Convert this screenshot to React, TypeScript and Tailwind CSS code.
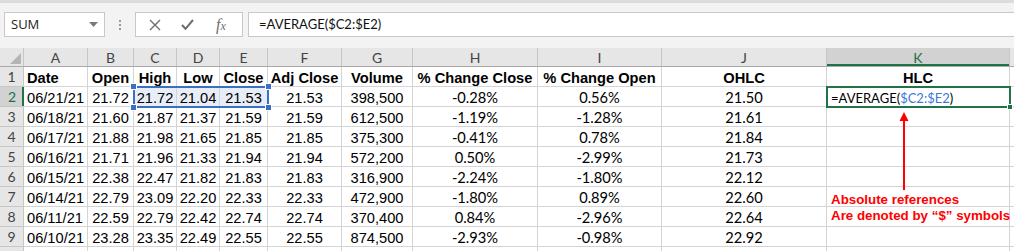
import React from "react";

const arial = "font-['Liberation_Sans',Arial,sans-serif]";
const calibri = "font-['Lato','Noto_Sans',sans-serif]";

const widths = [64, 46, 43, 43, 48, 74, 71, 125, 124, 165, 183];
const letters = ["A", "B", "C", "D", "E", "F", "G", "H", "I", "J", "K"];
const headings = ["Date", "Open", "High", "Low", "Close", "Adj Close", "Volume", "% Change Close", "% Change Open", "OHLC", "HLC"];

const rows = [
  ["06/21/21", "21.72", "21.72", "21.04", "21.53", "21.53", "398,500", "-0.28%", "0.56%", "21.50"],
  ["06/18/21", "21.60", "21.87", "21.37", "21.59", "21.59", "612,500", "-1.19%", "-1.28%", "21.61"],
  ["06/17/21", "21.88", "21.98", "21.65", "21.85", "21.85", "375,300", "-0.41%", "0.78%", "21.84"],
  ["06/16/21", "21.71", "21.96", "21.33", "21.94", "21.94", "572,200", "0.50%", "-2.99%", "21.73"],
  ["06/15/21", "22.38", "22.47", "21.82", "21.83", "21.83", "316,900", "-2.24%", "-1.80%", "22.12"],
  ["06/14/21", "22.79", "23.09", "22.20", "22.33", "22.33", "472,900", "-1.80%", "0.89%", "22.60"],
  ["06/11/21", "22.59", "22.79", "22.42", "22.74", "22.74", "370,400", "0.84%", "-2.96%", "22.64"],
  ["06/10/21", "23.28", "23.35", "22.49", "22.55", "22.55", "874,500", "-2.93%", "-0.98%", "22.92"],
];

function FormulaBar() {
  return (
    <div className="relative h-[48px] bg-[#f3f3f3]">
      <div className="h-[3px] bg-[#dcdcdc]" />
      <div className="flex items-start pt-[9px]">
        <div className="ml-[4px] flex h-[25px] w-[101px] items-center justify-between border border-[#c8c8c8] bg-white pl-[6px] pr-[6px]">
          <span className="font-['Open_Sans',sans-serif] text-[13px] text-[#222]">SUM</span>
          <svg width="9" height="5" viewBox="0 0 9 5">
            <path d="M0 0h9L4.5 5z" fill="#7a7a7a" />
          </svg>
        </div>
        <div className="ml-[14px] flex h-[25px] flex-col justify-center gap-[2px]">
          <span className="block h-[2px] w-[2px] bg-[#9a9a9a]" />
          <span className="block h-[2px] w-[2px] bg-[#9a9a9a]" />
          <span className="block h-[2px] w-[2px] bg-[#9a9a9a]" />
        </div>
        <div className="ml-[14px] flex h-[25px] w-[108px] items-center border border-[#c8c8c8] bg-white">
          <svg className="ml-[13px]" width="12" height="12" viewBox="0 0 12 12">
            <path d="M1 1l10 10M11 1L1 11" stroke="#6e6e6e" strokeWidth="1.4" />
          </svg>
          <svg className="ml-[20px]" width="13" height="11" viewBox="0 0 13 11">
            <path d="M1 6l3.5 3.8L12 1" stroke="#6e6e6e" strokeWidth="2" fill="none" />
          </svg>
          <span className="ml-[22px] font-['Liberation_Serif',serif] text-[16px] italic text-[#6e6e6e]">
            f<span className="text-[12px]">x</span>
          </span>
        </div>
        <div className="ml-[5px] flex h-[25px] flex-1 items-center border border-r-0 border-[#c8c8c8] bg-white pl-[10px]">
          <span className={`${calibri} text-[13px] text-[#111]`}>=AVERAGE($C2:$E2)</span>
        </div>
      </div>
    </div>
  );
}

function ColumnHeader() {
  return (
    <div className="flex h-[19px] border-b border-[#a9a9a9] bg-[#e6e6e6]">
      <div className="relative w-[24px] shrink-0 border-r border-[#c6c6c6]">
        <svg className="absolute bottom-[2px] right-[2px]" width="11" height="11" viewBox="0 0 11 11">
          <path d="M11 0v11H0z" fill="#b5b5b5" />
        </svg>
      </div>
      {letters.map((l, i) => (
        <div
          key={l}
          style={{ width: widths[i] }}
          className={
            l === "K"
              ? `shrink-0 border-r border-[#c6c6c6] bg-[#d2d2d2] text-center ${calibri} text-[14px] leading-[19px] text-[#217346] shadow-[inset_0_-2px_0_#217346]`
              : `shrink-0 border-r border-[#c6c6c6] text-center ${calibri} text-[14px] leading-[19px] text-[#444]`
          }
        >
          {l}
        </div>
      ))}
      <div className="flex-1" />
    </div>
  );
}

function RowHead({ n, active }: { n?: number; active?: boolean }) {
  return (
    <div
      className={
        active
          ? `w-[24px] shrink-0 border-b border-[#c6c6c6] bg-[#d2d2d2] text-center ${calibri} text-[14px] leading-[19px] text-[#217346] shadow-[inset_-2px_0_0_#217346]`
          : `w-[24px] shrink-0 border-b border-r border-[#c6c6c6] bg-[#e6e6e6] text-center ${calibri} text-[14px] leading-[19px] text-[#444]`
      }
    >
      {n}
    </div>
  );
}

function HeadingRow() {
  return (
    <div className="flex h-[20px]">
      <RowHead n={1} />
      {headings.map((h, i) => (
        <div
          key={h}
          style={{ width: widths[i] }}
          className={`shrink-0 overflow-hidden whitespace-nowrap border-b border-r border-[#d4d4d4] pt-[2px] ${arial} text-[14.67px] font-bold leading-[18px] text-black ${
            i === 0 ? "pl-[3px] text-left" : "text-center"
          }`}
        >
          {h}
        </div>
      ))}
      <div className="flex-1 border-b border-[#d4d4d4]" />
    </div>
  );
}

function DataRow({ n, cells }: { n: number; cells: string[] }) {
  return (
    <div className="flex h-[20px]">
      <RowHead n={n} active={n === 2} />
      {cells.map((c, i) => {
        const inRef = n === 2 && i >= 2 && i <= 4;
        const font = i >= 7 ? `${calibri} text-[14.67px]` : `${arial} text-[14.67px]`;
        return (
          <div
            key={i}
            style={{ width: widths[i] }}
            className={`shrink-0 overflow-hidden whitespace-nowrap border-b border-r border-[#d4d4d4] pt-[2px] leading-[18px] text-black ${font} ${
              i === 0 ? "pl-[3px] text-left" : "text-center"
            } ${inRef ? "bg-[#e8eef8]" : ""}`}
          >
            {c}
          </div>
        );
      })}
      <div
        style={{ width: widths[10] }}
        className={`shrink-0 whitespace-nowrap border-b border-r border-[#d4d4d4] pl-[4px] pt-[2px] leading-[18px] ${calibri} text-[13px] text-black`}
      >
        {n === 2 && (
          <>
            =AVERAGE(<span className="text-[#3b7ad9]">$C2:$E2</span>)
          </>
        )}
      </div>
      <div className="flex-1 border-b border-[#d4d4d4]" />
    </div>
  );
}

export default function App() {
  return (
    <div className="relative h-[251px] w-[1014px] overflow-hidden bg-white">
      <FormulaBar />
      <ColumnHeader />
      <HeadingRow />
      {rows.map((r, i) => (
        <DataRow key={i} n={i + 2} cells={r} />
      ))}
      <div className="flex h-[20px]">
        <RowHead />
        {widths.map((w, i) => (
          <div key={i} style={{ width: w }} className="shrink-0 border-r border-[#d4d4d4]" />
        ))}
      </div>

      {/* reference highlight C2:E2 */}
      <div className="pointer-events-none absolute left-[133px] top-[86px] h-[22px] w-[136px] border-2 border-[#3a6fc3]" />
      {[
        [131, 84],
        [266, 84],
        [131, 105],
        [266, 105],
      ].map(([x, y], i) => (
        <div
          key={i}
          style={{ left: x, top: y }}
          className="absolute h-[5px] w-[5px] bg-[#3a6fc3] outline outline-1 outline-white"
        />
      ))}

      {/* active cell K2 */}
      <div className="pointer-events-none absolute left-[826px] top-[86px] h-[22px] w-[185px] border-2 border-[#217346]" />
      <div className="absolute left-[1007px] top-[104px] h-[6px] w-[6px] border border-white bg-[#217346]" />

      {/* annotation */}
      <svg className="absolute left-[898px] top-[112px]" width="12" height="78" viewBox="0 0 12 78">
        <path d="M6 0L10.5 9h-9z" fill="#ff0000" />
        <path d="M6 8v70" stroke="#ff0000" strokeWidth="2" />
      </svg>
      <div className={`absolute left-[831px] top-[192px] ${arial} text-[13.33px] font-bold leading-[16px] text-[#ff0000]`}>
        <div>Absolute references</div>
        <div>Are denoted by “$” symbols</div>
      </div>
    </div>
  );
}
